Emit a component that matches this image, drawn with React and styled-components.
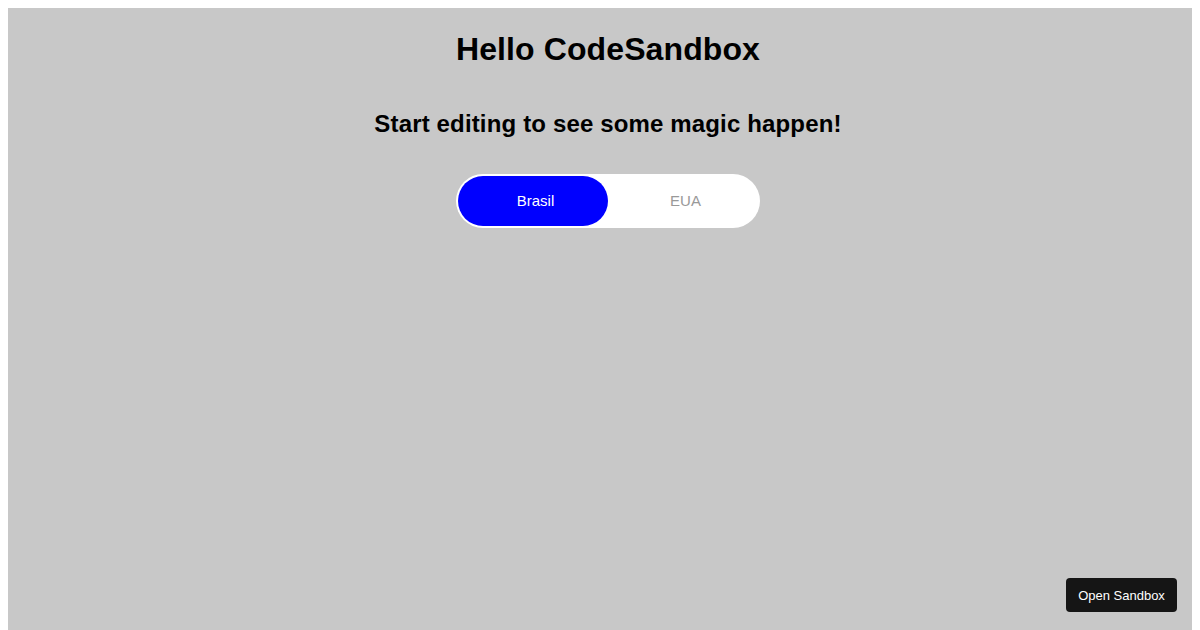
import { useState } from 'react';
import styled, { createGlobalStyle } from 'styled-components';

const GlobalStyle = createGlobalStyle`
  body {
    margin: 8px;
    background: #ffffff;
    font-family: "Liberation Sans", Arial, sans-serif;
    overflow: hidden;
  }
`;

const AppContainer = styled.div`
  width: 100vw;
  min-height: 100vh;
  background-color: #c8c8c8;
  display: flex;
  flex-direction: column;
  align-items: center;
  text-align: center;
`;

const Title = styled.h1`
  font-size: 32px;
  letter-spacing: 0.1px;
  margin: 22.5px 0 22.5px;
`;

const Subtitle = styled.h2`
  font-size: 24px;
  letter-spacing: 0.15px;
  margin: 19.92px 0;
`;

const Switch = styled.div`
  display: flex;
  margin-top: 16px;
  padding: 2px;
  background-color: #ffffff;
  border-radius: 27px;
`;

const Option = styled.button`
  width: 150px;
  height: 50px;
  padding: 0 0 0 5px;
  border: none;
  border-radius: 25px;
  font-family: inherit;
  font-size: 15px;
  cursor: pointer;
  background-color: ${(props) => (props.$active ? '#0000ff' : 'transparent')};
  color: ${(props) => (props.$active ? '#ffffff' : '#999999')};
`;

const OpenButton = styled.a`
  position: fixed;
  right: 23px;
  bottom: 18px;
  width: 111px;
  height: 34px;
  display: flex;
  align-items: center;
  justify-content: center;
  box-sizing: border-box;
  background-color: #151515;
  color: #ffffff;
  border-radius: 4px;
  font-size: 13px;
  text-decoration: none;
`;

const countries = ['Brasil', 'EUA'];

export default function App() {
  const [selected, setSelected] = useState('Brasil');

  return (
    <>
      <GlobalStyle />
      <AppContainer>
        <Title>Hello CodeSandbox</Title>
        <Subtitle>Start editing to see some magic happen!</Subtitle>
        <Switch>
          {countries.map((country) => (
            <Option
              key={country}
              $active={selected === country}
              onClick={() => setSelected(country)}
            >
              {country}
            </Option>
          ))}
        </Switch>
      </AppContainer>
      <OpenButton href="#">Open Sandbox</OpenButton>
    </>
  );
}
